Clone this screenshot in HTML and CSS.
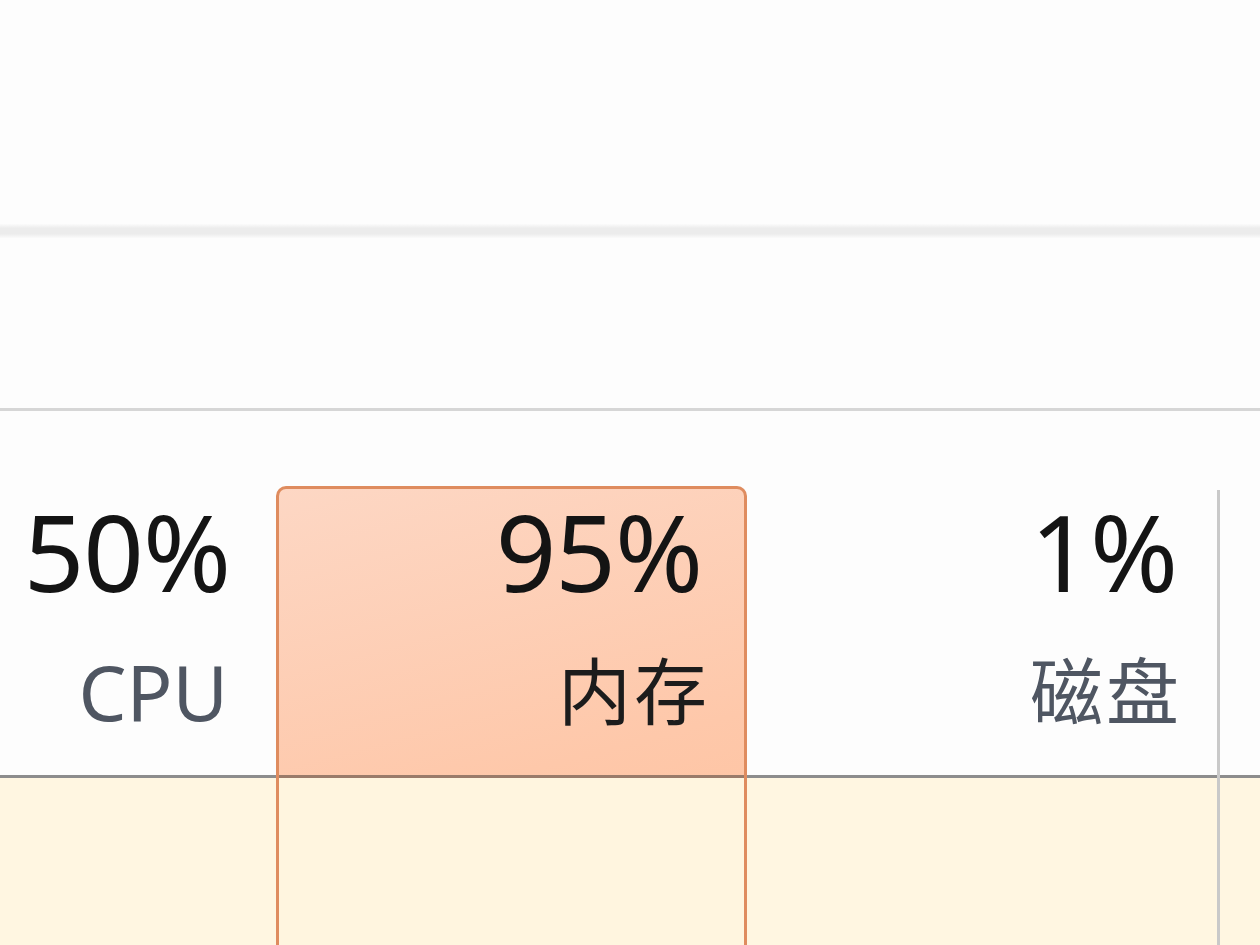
FILE: index.html
```html
<!DOCTYPE html>
<html lang="zh-CN">
<head>
<meta charset="utf-8">
<title>任务管理器</title>
<link rel="stylesheet" href="styles.css">
</head>
<body>
<div class="page">
  <div class="top"></div>
  <div class="band"></div>
  <div class="gap"></div>
  <div class="rule"></div>
  <div class="spacer"></div>
  <div class="table">
    <div class="col cpu">
      <div class="head"><div class="num">50%</div><div class="label">CPU</div></div>
      <div class="cell"></div>
    </div>
    <div class="col mem">
      <div class="head"><div class="num">95%</div><div class="label cjk dark">内存</div></div>
      <div class="cell"></div>
    </div>
    <div class="col disk">
      <div class="head"><div class="num">1%</div><div class="label cjk">磁盘</div></div>
      <div class="cell"></div>
    </div>
    <div class="col next">
      <div class="head"></div>
      <div class="cell"></div>
    </div>
  </div>
</div>
</body>
</html>
```
FILE: styles.css
```css
html, body {
  margin: 0;
  padding: 0;
  background: #fdfdfd;
}
.page {
  width: 1260px;
  height: 945px;
  overflow: hidden;
  display: flex;
  flex-direction: column;
  font-family: "Noto Sans", "Noto Sans CJK SC", sans-serif;
}
.top { height: 224px; flex: none; }
.band {
  height: 14px;
  flex: none;
  background: linear-gradient(#fbfbfb, #ececec 30%, #ececec 70%, #fbfbfb);
}
.gap { height: 170px; flex: none; }
.rule {
  height: 3px;
  flex: none;
  background: #d6d6d6;
}
.spacer { height: 75px; flex: none; }
.table {
  flex: 1;
  display: flex;
}
.col {
  display: flex;
  flex-direction: column;
  flex: none;
}
.cpu { width: 276px; }
.mem {
  width: 465px;
  border: 3px solid #df8c5f;
  border-bottom: none;
  border-radius: 10px 10px 0 0;
  background: linear-gradient(165deg, #fdd7c4 0%, #fec8aa 60%, #ffc09c 100%);
}
.disk {
  width: 470px;
  border-right: 3px solid #c9c9c9;
  margin-top: 4px;
}
.next { flex: 1; }
.head {
  flex: none;
  box-sizing: border-box;
  text-align: right;
  border-bottom: 3px solid #8d8d8d;
}
.cpu .head { height: 292px; padding: 12px 46px 0 0; }
.mem .head { height: 289px; padding: 9px 42px 0 0; border-bottom-color: #9a7b6a; }
.disk .head { height: 288px; padding: 8px 40px 0 0; }
.next .head { margin-top: 4px; height: 288px; }
.num {
  font-size: 106px;
  line-height: 1;
  color: #141414;
  letter-spacing: -1px;
}
.label {
  margin-top: 50px;
  font-size: 76px;
  line-height: 1;
  color: #4f5662;
}
.cpu .label { margin-right: 2px; }
.label.cjk {
  font-size: 73px;
  letter-spacing: 3px;
}
.mem .label { margin-right: -8px; }
.disk .label { margin-right: -5px; }
.label.dark { color: #1c1c1c; }
.cell {
  flex: 1;
  background: #fff6e1;
}
.mem .cell { background: #fff5df; }
```
